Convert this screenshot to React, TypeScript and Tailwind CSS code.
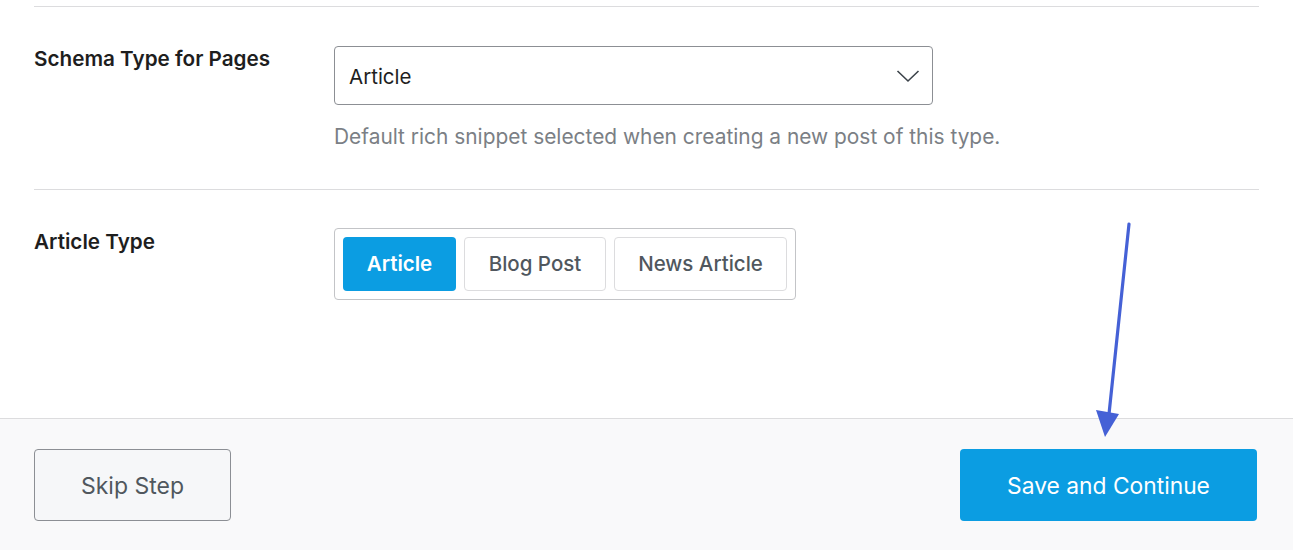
import React from "react";

export default function App() {
  return (
    <div className="relative w-[1293px] h-[550px] bg-white overflow-hidden" style={{ fontFamily: "Inter, 'Noto Sans', sans-serif" }}>
      <div className="px-[34px] pt-[6px] h-[418px]">
        <div className="border-t border-[#dcdcde]">
          <div className="flex pt-[39px] pb-[39px]">
            <div className="w-[300px] pt-[0px] text-[20.7px] font-semibold text-[#1e1e1e] leading-[26px]">Schema Type for Pages</div>
            <div>
              <div className="w-[599px] h-[59px] border border-[#8c8f94] rounded-[4px] flex items-center justify-between pl-[14px] pr-[12px]">
                <span className="pt-[3px] text-[20.5px] text-[#1e1e1e]">Article</span>
                <svg width="24" height="14" viewBox="0 0 24 14" fill="none">
                  <path d="M1.5 2 L12 12 L22.5 2" stroke="#3c434a" strokeWidth="1.6" />
                </svg>
              </div>
              <div className="mt-[19px] text-[20.9px] text-[#7b7f85] leading-[26px]">Default rich snippet selected when creating a new post of this type.</div>
            </div>
          </div>
        </div>
        <div className="border-t border-[#dcdcde]">
          <div className="flex pt-[38px]">
            <div className="w-[300px] pt-[1px] text-[20.7px] font-semibold text-[#1e1e1e] leading-[26px]">Article Type</div>
            <div className="flex gap-[8px] p-[8px] border border-[#c3c4c7] rounded-[4px]">
              <button className="h-[54px] w-[113px] pt-[1px] rounded-[4px] bg-[#0b9de2] text-white text-[20.5px] font-semibold">Article</button>
              <button className="h-[54px] w-[142px] pt-[1px] rounded-[4px] border border-[#dcdcde] bg-white text-[#50575e] text-[20.5px] font-medium">Blog Post</button>
              <button className="h-[54px] w-[173px] pt-[1px] rounded-[4px] border border-[#dcdcde] bg-white text-[#50575e] text-[20.5px] font-medium">News Article</button>
            </div>
          </div>
        </div>
      </div>
      <div className="h-[132px] border-t border-[#dcdcde] bg-[#f9f9fa] flex items-start justify-between pl-[34px] pr-[36px] pt-[30px]">
        <button className="w-[197px] h-[72px] pt-[3px] border border-[#8c8f94] rounded-[4px] bg-[#f6f7f9] text-[23px] text-[#50575e]">Skip Step</button>
        <button className="w-[297px] h-[72px] pt-[3px] rounded-[4px] bg-[#0b9de2] text-[22.8px] text-white">Save and Continue</button>
      </div>
      <svg className="absolute left-0 top-0 pointer-events-none" width="1293" height="550">
        <line x1="1129" y1="224" x2="1109" y2="414" stroke="#4561d6" strokeWidth="3.2" strokeLinecap="round" />
        <polygon points="1096,410 1119,414 1105,437" fill="#4561d6" />
      </svg>
    </div>
  );
}
